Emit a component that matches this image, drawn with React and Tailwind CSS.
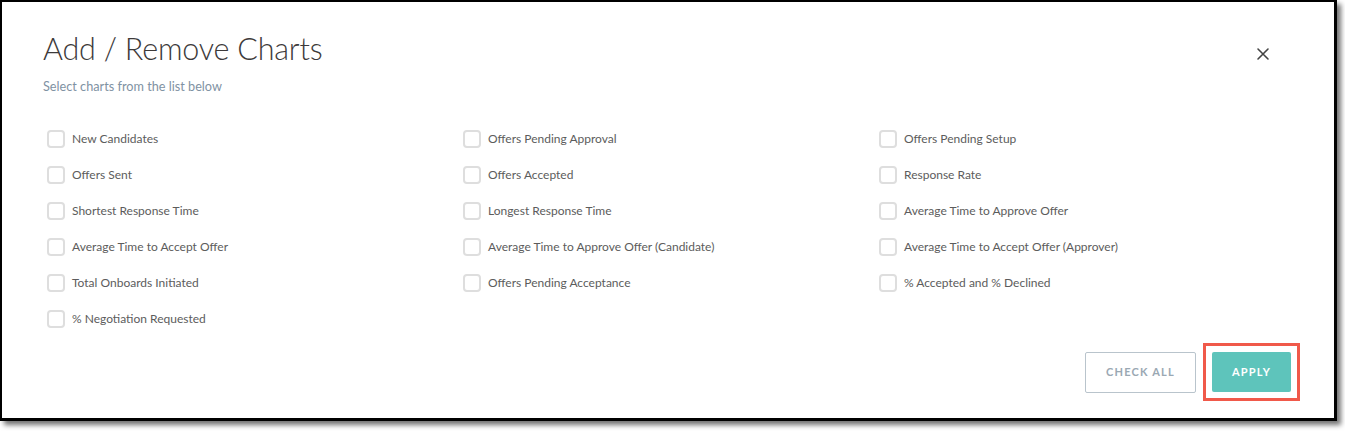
import React from 'react';

const columns = [
  [
    'New Candidates',
    'Offers Sent',
    'Shortest Response Time',
    'Average Time to Accept Offer',
    'Total Onboards Initiated',
    '% Negotiation Requested',
  ],
  [
    'Offers Pending Approval',
    'Offers Accepted',
    'Longest Response Time',
    'Average Time to Approve Offer (Candidate)',
    'Offers Pending Acceptance',
  ],
  [
    'Offers Pending Setup',
    'Response Rate',
    'Average Time to Approve Offer',
    'Average Time to Accept Offer (Approver)',
    '% Accepted and % Declined',
  ],
];

function ChartOption({ label }) {
  return (
    <label className="flex items-center h-[36px] gap-[7px] cursor-pointer">
      <span className="w-[18px] h-[18px] rounded-[4px] border-2 border-[#dedede] bg-white shrink-0" />
      <span className="text-[12px] text-[#5c5c5c]">{label}</span>
    </label>
  );
}

export default function App() {
  return (
    <div className="w-[1345px] h-[431px] bg-white" style={{ fontFamily: 'Lato, "Open Sans", sans-serif' }}>
      <div className="w-[1337px] h-[421px] bg-white border-l-2 border-t-2 border-r-[3px] border-b-[3px] border-black shadow-[4px_4px_5px_rgba(0,0,0,0.55)] flex flex-col">
        <header className="flex justify-between items-start pl-[41px] pr-[64px] pt-[27px]">
          <div>
            <h1 className="text-[30.5px] font-light text-[#3d3a3a] leading-[38px] tracking-[-0.2px]">Add / Remove Charts</h1>
            <p className="mt-[10px] text-[12.7px] text-[#7f92a3] leading-[18px]">Select charts from the list below</p>
          </div>
          <button className="mt-[18px] w-[14px] h-[14px] text-[#444]">
            <svg viewBox="0 0 14 14" className="w-[14px] h-[14px]" stroke="currentColor" strokeWidth="1.6" strokeLinecap="round">
              <path d="M2 2 L12 12 M12 2 L2 12" />
            </svg>
          </button>
        </header>

        <div className="grid grid-cols-[416px_416px_416px] pl-[45px] mt-[26px]">
          {columns.map((col, i) => (
            <div key={i} className="flex flex-col">
              {col.map((label) => (
                <ChartOption key={label} label={label} />
              ))}
            </div>
          ))}
        </div>

        <footer className="flex justify-end items-center pr-[34px] mt-[6px] gap-[7px]">
          <button className="w-[111px] h-[41px] rounded-[2px] border border-[#b9c4cc] text-[11px] font-bold tracking-[1.2px] text-[#9aa8b3]">
            CHECK ALL
          </button>
          <div className="border-[3px] border-[#f0594a] p-[6px]">
            <button className="w-[79px] h-[40px] rounded-[2px] bg-[#5ec4bb] text-[11px] font-bold tracking-[1.2px] text-white">
              APPLY
            </button>
          </div>
        </footer>
      </div>
    </div>
  );
}
